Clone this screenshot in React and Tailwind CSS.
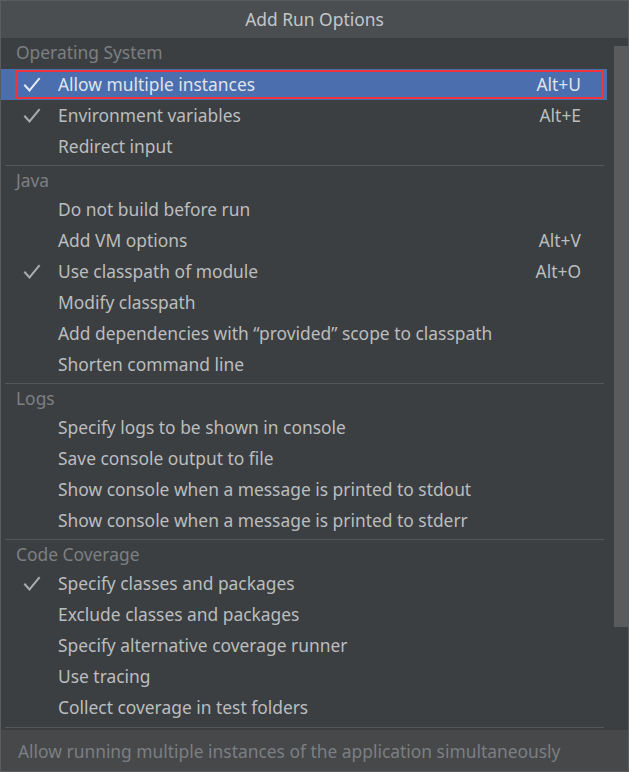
import React from 'react';

const sections = [
  {
    title: 'Operating System',
    items: [
      { label: 'Allow multiple instances', checked: true, key: 'Alt+U', selected: true },
      { label: 'Environment variables', checked: true, key: 'Alt+E' },
      { label: 'Redirect input' },
    ],
  },
  {
    title: 'Java',
    items: [
      { label: 'Do not build before run' },
      { label: 'Add VM options', key: 'Alt+V' },
      { label: 'Use classpath of module', checked: true, key: 'Alt+O' },
      { label: 'Modify classpath' },
      { label: 'Add dependencies with \u201cprovided\u201d scope to classpath' },
      { label: 'Shorten command line' },
    ],
  },
  {
    title: 'Logs',
    items: [
      { label: 'Specify logs to be shown in console' },
      { label: 'Save console output to file' },
      { label: 'Show console when a message is printed to stdout' },
      { label: 'Show console when a message is printed to stderr' },
    ],
  },
  {
    title: 'Code Coverage',
    items: [
      { label: 'Specify classes and packages', checked: true },
      { label: 'Exclude classes and packages' },
      { label: 'Specify alternative coverage runner' },
      { label: 'Use tracing' },
      { label: 'Collect coverage in test folders' },
    ],
  },
];

function Check({ color }) {
  return (
    <svg width="18" height="16" viewBox="0 0 18 16" fill="none">
      <path d="M2 8.5 L6.5 13.5 L16 2" stroke={color} strokeWidth="2" strokeLinecap="square" />
    </svg>
  );
}

function Row({ item }) {
  if (item.selected) {
    return (
      <div className="h-[31px] bg-[#4b6eaf] pl-[14px] pr-[3px] py-[1px]">
        <div className="h-full flex items-center border-2 border-[#f0343c] pl-[6px] pr-[21px]">
          <div className="w-[35px] flex items-center pt-[1px]"><Check color="#e6ebf3" /></div>
          <span className="flex-1 text-[#dfe4ec]">{item.label}</span>
          <span className="text-[#dfe4ec]">{item.key}</span>
        </div>
      </div>
    );
  }
  return (
    <div className="h-[31px] flex items-center pl-[22px] pr-[26px]">
      <div className="w-[35px] flex items-center pt-[1px]">{item.checked && <Check color="#a9acae" />}</div>
      <span className="flex-1 text-[#bbbdbf]">{item.label}</span>
      {item.key && <span className="text-[#bbbdbf]">{item.key}</span>}
    </div>
  );
}

function Separator({ last }) {
  return (
    <div className={last ? 'pt-[4px] pl-[4px] pr-[3px]' : 'pt-[3px] pl-[4px] pr-[3px]'}>
      <div className="h-px bg-[#54575a]" />
    </div>
  );
}

export default function App() {
  return (
    <div
      className="w-[629px] h-[772px] flex flex-col bg-[#3c3f41] border border-[#5a5c5e] overflow-hidden text-[17.4px]"
      style={{ fontFamily: '"Noto Sans", "Open Sans", sans-serif' }}
    >
      <div className="h-[37px] shrink-0 bg-[#4b4e51] flex items-center justify-center pb-[1px] text-[#c4c6c8]">
        Add Run Options
      </div>
      <div className="flex-1 flex">
        <div className="w-[606px] mr-[7px] flex flex-col">
          {sections.map((s, si) => (
            <div key={s.title}>
              {si > 0 && <Separator />}
              <div
                className={
                  si === 0
                    ? 'h-[31px] flex items-center pl-[15px] pb-[2px] text-[#7c7f82]'
                    : 'h-[28px] flex items-center pl-[15px] text-[#7c7f82]'
                }
              >
                {s.title}
              </div>
              {s.items.map((it) => <Row key={it.label} item={it} />)}
            </div>
          ))}
          <Separator last />
        </div>
        <div className="w-[14px] pt-[8px]">
          <div className="h-[581px] bg-[#595b5d]" />
        </div>
      </div>
      <div className="h-[41px] shrink-0 bg-[#46484a] flex items-center pl-[17px] pt-[2px] text-[#7c7f82]">
        Allow running multiple instances of the application simultaneously
      </div>
    </div>
  );
}
